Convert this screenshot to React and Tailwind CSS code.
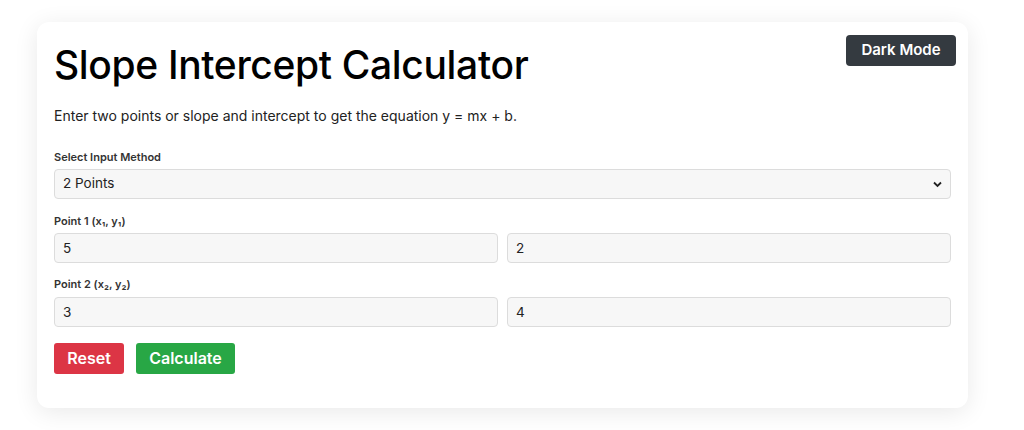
import React from 'react';

export default function App() {
  const input = 'w-full h-[30px] rounded-[4px] border border-[#dcdcdc] bg-[#f7f7f7] px-[8px] text-[13.5px] text-[#222] outline-none';
  return (
    <div className="min-h-[430px] bg-white pt-[22px] px-[37px]" style={{ fontFamily: 'Inter, "Liberation Sans", sans-serif' }}>
      <div className="relative w-[931px] rounded-[12px] bg-white px-[17px] pt-[19px] pb-[34px] shadow-[0_4px_24px_rgba(0,0,0,0.09)]">
        <button type="button" className="absolute top-[13px] right-[12px] h-[31px] w-[110px] rounded-[4px] bg-[#343a40] text-[15px] font-semibold text-white">
          Dark Mode
        </button>
        <h1 className="text-[39px] leading-[48px] font-medium tracking-[-0.35px] text-black">Slope Intercept Calculator</h1>
        <p className="mt-[17px] text-[14px] leading-[20px] text-[#222]">
          Enter two points or slope and intercept to get the equation y = mx + b.
        </p>
        <div className="mt-[23px] text-[11px] font-semibold text-[#333]">Select Input Method</div>
        <div className="relative mt-[3px]">
          <select className={`${input} appearance-none`} defaultValue="2 Points">
            <option>2 Points</option>
            <option>Slope and Intercept</option>
          </select>
          <svg className="pointer-events-none absolute right-[9px] top-[12px]" width="9" height="7" viewBox="0 0 9 7">
            <path d="M1 1.5l3.5 3.5 3.5-3.5" fill="none" stroke="#222" strokeWidth="1.8" />
          </svg>
        </div>
        <div className="mt-[14px] text-[11px] font-semibold text-[#333]">Point 1 (x₁, y₁)</div>
        <div className="mt-[4px] grid grid-cols-2 gap-[9px]">
          <input className={input} defaultValue="5" />
          <input className={input} defaultValue="2" />
        </div>
        <div className="mt-[13px] text-[11px] font-semibold text-[#333]">Point 2 (x₂, y₂)</div>
        <div className="mt-[4px] grid grid-cols-2 gap-[9px]">
          <input className={input} defaultValue="3" />
          <input className={input} defaultValue="4" />
        </div>
        <div className="mt-[16px] flex gap-[12px]">
          <button type="button" className="h-[31px] w-[70px] rounded-[3px] bg-[#dc3545] text-[16px] font-semibold text-white">Reset</button>
          <button type="button" className="h-[31px] w-[99px] rounded-[3px] bg-[#28a745] text-[16px] font-semibold text-white">Calculate</button>
        </div>
      </div>
    </div>
  );
}
